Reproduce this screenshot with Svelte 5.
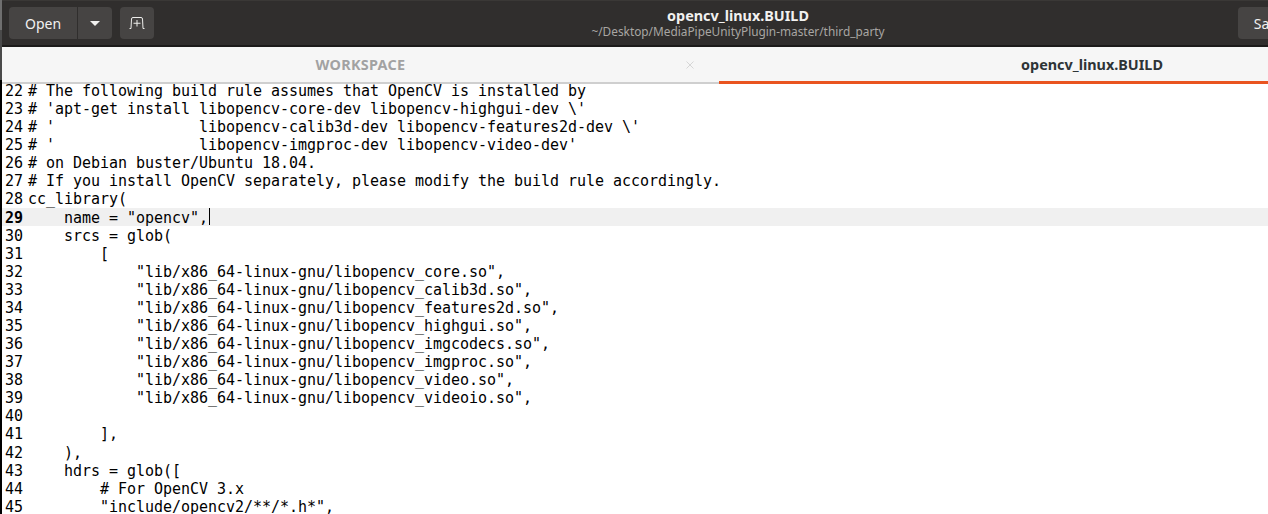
<script>
    const lines = [
        { n: 22, text: "# The following build rule assumes that OpenCV is installed by" },
        { n: 23, text: "# 'apt-get install libopencv-core-dev libopencv-highgui-dev \\'" },
        { n: 24, text: "# '                libopencv-calib3d-dev libopencv-features2d-dev \\'" },
        { n: 25, text: "# '                libopencv-imgproc-dev libopencv-video-dev'" },
        { n: 26, text: "# on Debian buster/Ubuntu 18.04." },
        { n: 27, text: "# If you install OpenCV separately, please modify the build rule accordingly." },
        { n: 28, text: "cc_library(" },
        { n: 29, text: '    name = "opencv",', current: true },
        { n: 30, text: "    srcs = glob(" },
        { n: 31, text: "        [" },
        { n: 32, text: '            "lib/x86_64-linux-gnu/libopencv_core.so",' },
        { n: 33, text: '            "lib/x86_64-linux-gnu/libopencv_calib3d.so",' },
        { n: 34, text: '            "lib/x86_64-linux-gnu/libopencv_features2d.so",' },
        { n: 35, text: '            "lib/x86_64-linux-gnu/libopencv_highgui.so",' },
        { n: 36, text: '            "lib/x86_64-linux-gnu/libopencv_imgcodecs.so",' },
        { n: 37, text: '            "lib/x86_64-linux-gnu/libopencv_imgproc.so",' },
        { n: 38, text: '            "lib/x86_64-linux-gnu/libopencv_video.so",' },
        { n: 39, text: '            "lib/x86_64-linux-gnu/libopencv_videoio.so",' },
        { n: 40, text: "" },
        { n: 41, text: "        ]," },
        { n: 42, text: "    )," },
        { n: 43, text: "    hdrs = glob([" },
        { n: 44, text: "        # For OpenCV 3.x" },
        { n: 45, text: '        "include/opencv2/**/*.h*",' }
    ];
</script>

<div class="screen">
    <div class="window">
        <header class="headerbar">
            <div class="left-group">
                <div class="linked">
                    <button class="btn open">Open</button>
                    <button class="btn arrow" aria-label="Open menu">
                        <svg width="10" height="5" viewBox="0 0 10 5"><path d="M0 0h10L5 5z" fill="#f2f1f0" /></svg>
                    </button>
                </div>
                <button class="btn newtab" aria-label="New tab">
                    <svg width="16" height="12" viewBox="0 0 16 12" fill="none" stroke="#eeeeec" stroke-width="1">
                        <path d="M0.500 11.500h1.500l0.500-9.500q0-1.500 1.500-1.500h8q1.500 0 1.500 1.500l0.500 9.500h1.500" />
                        <path d="M8 3v6.500M4.500 6.250h7" />
                    </svg>
                </button>
            </div>
            <div class="titles">
                <div class="title">opencv_linux.BUILD</div>
                <div class="subtitle">~/Desktop/MediaPipeUnityPlugin-master/third_party</div>
            </div>
            <button class="btn save">Save</button>
        </header>

        <nav class="tabs">
            <div class="tab inactive">
                <span>WORKSPACE</span>
                <svg class="close" width="8" height="8" viewBox="0 0 8 8" stroke="#d6d6d6" stroke-width="1"><path d="M0.500 0.500l7 7M7.500 0.500l-7 7" /></svg>
            </div>
            <div class="tab active"><span>opencv_linux.BUILD</span></div>
        </nav>

        <main class="editor">
            {#each lines as line}
                <div class="row" class:current={line.current}>
                    <span class="num">{line.n}</span>
                    <span class="code">{line.text}{#if line.current}<i class="cursor"></i>{/if}</span>
                </div>
            {/each}
        </main>
    </div>
</div>

<style>
    :global(body) {
        background: #000;
        overflow: hidden;
    }

    .screen {
        background: linear-gradient(#6f6f6f 0 30px, #4a4a4a 30px 80px, #000 80px);
        height: 514px;
        overflow: hidden;
        padding-left: 2px;
    }

    /* the window runs past the right edge of the shot, which is why the title sits right of centre */
    .window {
        background: #fff;
        height: 514px;
        overflow: hidden;
        width: 1472px;
    }

    .headerbar {
        align-items: flex-start;
        background: linear-gradient(#3a3836 0 1px, #302e2d 1px 45px, #1c1b1a 45px);
        box-sizing: border-box;
        display: flex;
        height: 47px;
        justify-content: space-between;
        padding: 7px 174px 0 7px;
        position: relative;
    }

    .left-group {
        display: flex;
        gap: 8px;
    }

    .linked {
        display: flex;
    }

    .btn {
        align-items: center;
        background: #464443;
        border: 0;
        border-radius: 4px;
        color: #f2f1f0;
        display: flex;
        font-family: "Noto Sans", sans-serif;
        font-size: 14px;
        height: 32px;
        justify-content: center;
        padding: 0;
    }

    .open {
        border-radius: 4px 0 0 4px;
        border-right: 1px solid #302e2d;
        width: 69px;
    }

    .arrow {
        border-radius: 0 4px 4px 0;
        width: 34px;
    }

    .newtab {
        width: 34px;
    }

    .titles {
        left: 0;
        position: absolute;
        right: 0;
        text-align: center;
        top: 7px;
    }

    .title {
        color: #f2f1f0;
        font-family: "Noto Sans", sans-serif;
        font-size: 14.4px;
        font-weight: 700;
        line-height: 17px;
    }

    .subtitle {
        color: #a8a6a3;
        font-family: "Noto Sans", sans-serif;
        font-size: 11.85px;
        line-height: 15px;
    }

    .save {
        width: 62px;
    }

    .tabs {
        background: #f6f6f6;
        display: flex;
        height: 37px;
    }

    .tab {
        align-items: center;
        box-sizing: border-box;
        display: flex;
        font-family: "Noto Sans", sans-serif;
        font-size: 14.4px;
        font-weight: 700;
        justify-content: center;
        position: relative;
    }

    .inactive {
        border-bottom: 2px solid #cfcfcf;
        color: #a2a2a2;
        letter-spacing: 0.3px;
        width: 717px;
    }

    .close {
        position: absolute;
        right: 25px;
        top: 14px;
    }

    .active {
        border-bottom: 3px solid #e95420;
        color: #2e3436;
        width: 746px;
    }

    /* pulled up so the first line's box runs under the tab strip's bottom edge, as in gedit */
    .editor {
        margin-top: -3px;
        position: relative;
    }

    .row {
        color: #000;
        display: flex;
        font-family: "DejaVu Sans Mono", monospace;
        font-size: 15px;
        height: 18.09px;
        letter-spacing: -0.03px;
        line-height: 20px;
        white-space: pre;
    }

    .row.current {
        background: #f0f0f0;
    }

    .current .num {
        font-weight: 700;
    }

    .num {
        box-sizing: border-box;
        flex-shrink: 0;
        padding-left: 3px;
        width: 26px;
    }

    .cursor {
        background: #000;
        display: inline-block;
        height: 17px;
        margin-left: 1px;
        vertical-align: top;
        width: 1px;
    }
</style>
